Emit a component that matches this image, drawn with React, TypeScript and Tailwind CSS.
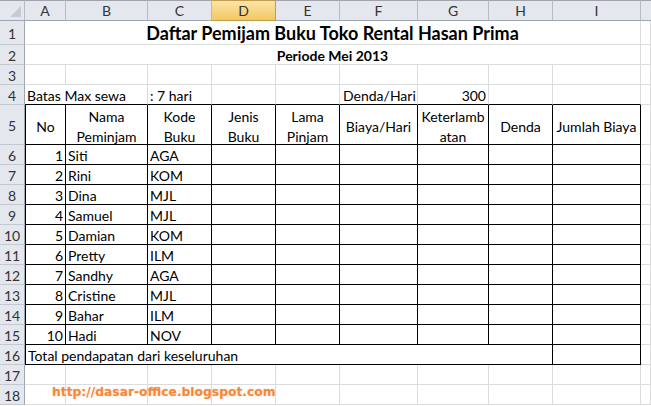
import { ReactNode } from 'react';

type Align = 'left' | 'right' | 'center';

interface CellProps {
  span?: 1 | 2 | 8 | 9;
  br?: boolean;
  bb?: boolean;
  bl?: boolean;
  align?: Align;
  wrap?: boolean;
  className?: string;
  children?: ReactNode;
}

const spanClass = { 1: '', 2: 'col-span-2', 8: 'col-span-8', 9: 'col-span-9' };
const alignClass = {
  left: 'justify-start pl-[2px]',
  right: 'justify-end pr-[2px]',
  center: 'justify-center text-center',
};

function Cell({
  span = 1,
  br = false,
  bb = false,
  bl = false,
  align = 'left',
  wrap = false,
  className = '',
  children,
}: CellProps) {
  return (
    <div
      className={[
        'flex items-center overflow-hidden border-r border-b text-black',
        spanClass[span],
        alignClass[align],
        br ? 'border-r-black' : 'border-r-[#dadcdd]',
        bb ? 'border-b-black' : 'border-b-[#dadcdd]',
        bl ? 'border-l border-l-black' : '',
        wrap ? 'pt-[4px] leading-[20px]' : 'pt-[2px] whitespace-nowrap',
        className,
      ].join(' ')}
    >
      {children}
    </div>
  );
}

function RowHead({ n }: { n: number }) {
  return (
    <div className="flex items-center justify-center border-r border-b border-r-[#9ea6b0] border-b-[#c3c9d0] bg-[#e4e8ee] pt-[1px] text-[#333]">
      {n}
    </div>
  );
}

const columns = ['A', 'B', 'C', 'D', 'E', 'F', 'G', 'H', 'I'];

const borrowers = [
  ['Siti', 'AGA'],
  ['Rini', 'KOM'],
  ['Dina', 'MJL'],
  ['Samuel', 'MJL'],
  ['Damian', 'KOM'],
  ['Pretty', 'ILM'],
  ['Sandhy', 'AGA'],
  ['Cristine', 'MJL'],
  ['Bahar', 'ILM'],
  ['Hadi', 'NOV'],
];

const headings: ReactNode[] = [
  'No',
  <>Nama<br />Peminjam</>,
  <>Kode<br />Buku</>,
  <>Jenis<br />Buku</>,
  <>Lama<br />Pinjam</>,
  'Biaya/Hari',
  <>Keterlamb<br />atan</>,
  'Denda',
  'Jumlah Biaya',
];

function EmptyRow({ n }: { n: number }) {
  return (
    <>
      <RowHead n={n} />
      {columns.map((c) => (
        <Cell key={c} />
      ))}
      <Cell />
    </>
  );
}

export default function App() {
  return (
    <div className="relative h-[406px] w-[651px] overflow-hidden bg-white font-['Lato',sans-serif] text-[14px]">
      <div className="grid grid-cols-[25px_41px_82px_64px_64px_64px_78px_71px_64px_88px_1fr] grid-rows-[21px_24px_20px_20px_20px_40px_repeat(13,20px)]">
        {/* column letters */}
        <div className="relative border-t border-r border-b border-t-[#a0a4aa] border-r-[#b6bcc4] border-b-[#9ea6b0] bg-[#e4e8ee]">
          <svg className="absolute right-[3px] bottom-[3px]" width="11" height="11" viewBox="0 0 11 11">
            <polygon points="11,0 11,11 0,11" fill="#c6cbd1" />
          </svg>
        </div>
        {columns.map((c) =>
          c === 'D' ? (
            <div
              key={c}
              className="flex items-center justify-center border border-l-0 border-[#c29b4c] bg-linear-to-b from-[#fbe5a6] to-[#f4c760] text-[#333]"
            >
              {c}
            </div>
          ) : (
            <div
              key={c}
              className="flex items-center justify-center border-t border-r border-b border-t-[#a0a4aa] border-r-[#b6bcc4] border-b-[#9ea6b0] bg-[#e4e8ee] text-[#333]"
            >
              {c}
            </div>
          )
        )}
        <div className="border-t border-b border-t-[#a0a4aa] border-b-[#9ea6b0] bg-[#e4e8ee]" />

        {/* row 1 */}
        <RowHead n={1} />
        <Cell span={9} align="center" className="text-[18px] font-bold">
          Daftar Pemijam Buku Toko Rental Hasan Prima
        </Cell>
        <Cell />

        {/* row 2 */}
        <RowHead n={2} />
        <Cell span={9} align="center" className="font-bold">
          Periode Mei 2013
        </Cell>
        <Cell />

        <EmptyRow n={3} />

        {/* row 4 */}
        <RowHead n={4} />
        <Cell span={2} bb>
          Batas Max sewa
        </Cell>
        <Cell bb>: 7 hari</Cell>
        <Cell bb />
        <Cell bb />
        <Cell bb className="pl-[3px]">
          Denda/Hari
        </Cell>
        <Cell bb align="right">
          300
        </Cell>
        <Cell bb />
        <Cell bb />
        <Cell />

        {/* row 5 headings */}
        <RowHead n={5} />
        {headings.map((h, i) => (
          <Cell key={i} br bb bl={i === 0} align="center" wrap>
            <span>{h}</span>
          </Cell>
        ))}
        <Cell />

        {/* data rows */}
        {borrowers.map(([name, code], i) => (
          <div key={name} className="contents">
            <RowHead n={i + 6} />
            <Cell br bb bl align="right">
              {i + 1}
            </Cell>
            <Cell br bb>
              {name}
            </Cell>
            <Cell br bb>
              {code}
            </Cell>
            <Cell br bb />
            <Cell br bb />
            <Cell br bb />
            <Cell br bb />
            <Cell br bb />
            <Cell br bb />
            <Cell />
          </div>
        ))}

        {/* row 16 */}
        <RowHead n={16} />
        <Cell span={8} br bb bl>
          Total pendapatan dari keseluruhan
        </Cell>
        <Cell br bb />
        <Cell />

        <EmptyRow n={17} />
        <EmptyRow n={18} />
      </div>

      <div className="absolute top-[383px] left-[52px] font-['DejaVu_Sans',sans-serif] text-[12.3px] font-bold whitespace-nowrap text-[#f7883a] [text-shadow:0_0_2px_#fdd9bd]">
        http://dasar-office.blogspot.com
      </div>
    </div>
  );
}
